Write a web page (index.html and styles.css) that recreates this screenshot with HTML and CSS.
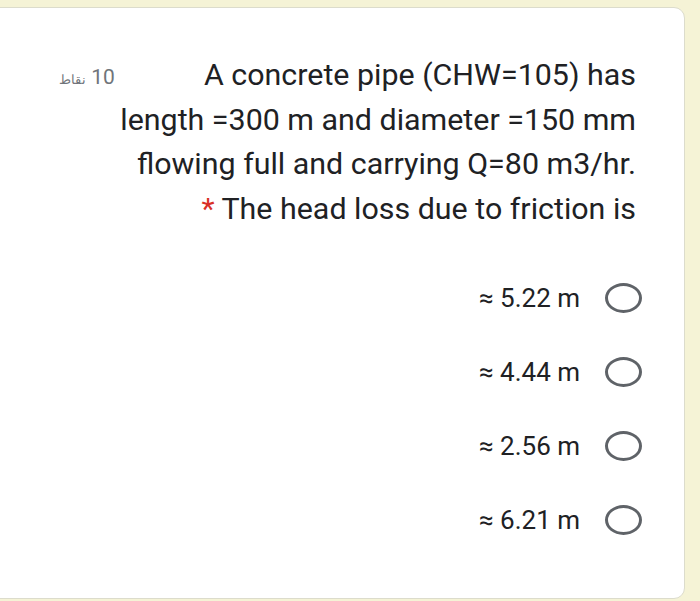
FILE: index.html
```html
<!DOCTYPE html>
<html>
<head>
<meta charset="utf-8">
<link rel="stylesheet" href="styles.css">
</head>
<body>
<div class="card">
  <div class="header">
    <div class="points">10 <span class="ar">نقاط</span></div>
    <div class="question">
      <div class="line">A concrete pipe (CHW=105) has</div>
      <div class="line">length =300 m and diameter =150 mm</div>
      <div class="line">flowing full and carrying Q=80 m3/hr.</div>
      <div class="line"><span class="req">*</span> The head loss due to friction is</div>
    </div>
  </div>
  <div class="options">
    <div class="option"><span class="label">≈ 5.22 m</span><span class="radio"></span></div>
    <div class="option"><span class="label">≈ 4.44 m</span><span class="radio"></span></div>
    <div class="option"><span class="label">≈ 2.56 m</span><span class="radio"></span></div>
    <div class="option"><span class="label">≈ 6.21 m</span><span class="radio"></span></div>
  </div>
</div>
</body>
</html>
```

FILE: styles.css
```css
html, body {
  margin: 0;
  padding: 0;
  height: 601px;
  overflow: hidden;
  background: #f5f3d6;
  font-family: Roboto, "Noto Sans", sans-serif;
  color: #202124;
}
.card {
  margin: 7px 15px 0 -12px;
  height: 592px;
  background: #ffffff;
  border: 1px solid #dcdccc;
  border-radius: 11px;
  box-sizing: border-box;
  padding: 45px 42px 0 72px;
}
.header {
  display: flex;
  justify-content: space-between;
  align-items: flex-start;
}
.points {
  direction: rtl;
  font-size: 21px;
  line-height: 24px;
  color: #70757a;
  margin-top: 12px;
  margin-left: -2px;
  white-space: nowrap;
}
.ar {
  font-size: 13px;
}
.question {
  text-align: right;
  font-size: 30.4px;
  line-height: 44.5px;
  margin-right: 6px;
  white-space: nowrap;
}
.req {
  color: #d93025;
}
.options {
  margin-top: 48px;
  display: flex;
  flex-direction: column;
  align-items: flex-end;
  gap: 37px;
}
.option {
  display: flex;
  align-items: center;
  height: 37px;
}
.label {
  font-size: 26px;
  margin-right: 25px;
}
.radio {
  width: 31px;
  height: 24px;
  border: 3px solid #5f6368;
  border-radius: 50%;
}
```
